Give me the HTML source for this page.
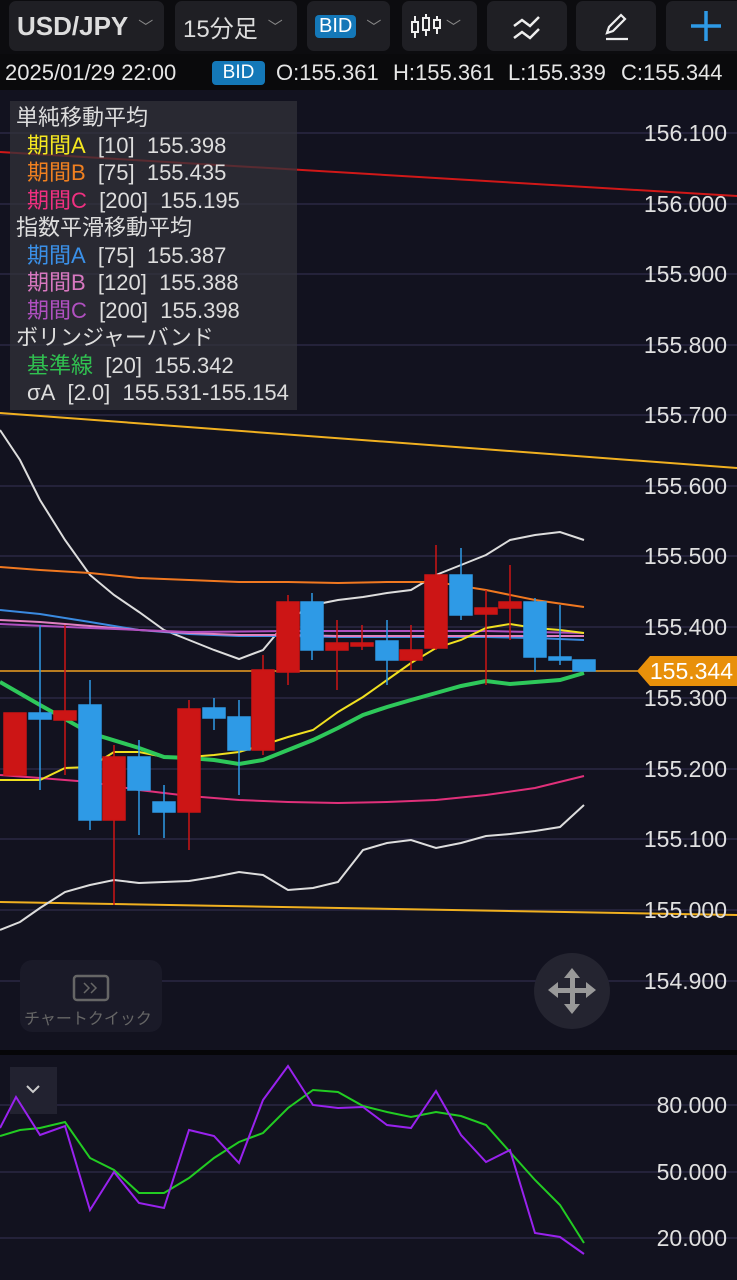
<!DOCTYPE html><html><head><meta charset="utf-8"><style>
body{margin:0;width:737px;height:1280px;background:#12121f;overflow:hidden;font-family:"Liberation Sans","Noto Sans CJK JP",sans-serif;color:#ddd;position:relative}
.top{position:absolute;left:0;top:0;width:737px;height:54px;background:#0c0c0f}
.btn{position:absolute;top:1px;height:50px;background:#1f1f24;border-radius:7px;display:flex;align-items:center;font-size:24px;font-weight:bold;color:#ddd}
.chev{color:#888;font-size:15px;margin-left:10px;font-weight:normal}
.bid{background:#1478b8;color:#fff;border-radius:4px;padding:0 4px;font-weight:normal}
.info{position:absolute;left:0;top:54px;width:737px;height:36px;background:#0a0a0c;font-size:22px;color:#e6e6e6;line-height:38px}
.info span{position:absolute;top:0}
.leg{position:absolute;left:10px;top:101px;width:287px;height:309px;background:rgba(50,50,58,.75);font-size:22px;line-height:27.5px;padding:3px 0 0 6px;box-sizing:border-box}
.leg div{white-space:nowrap}
.i{padding-left:11px}
.pl{position:absolute;right:10px;font-size:23px;color:#e0e0e0}
</style></head><body>
<svg style="position:absolute;left:0;top:0" width="737" height="1280">
<g stroke="#2a2844" stroke-width="1.5">
<line x1="0" y1="133" x2="737" y2="133"/><line x1="0" y1="204" x2="737" y2="204"/><line x1="0" y1="274" x2="737" y2="274"/><line x1="0" y1="345" x2="737" y2="345"/><line x1="0" y1="415" x2="737" y2="415"/><line x1="0" y1="486" x2="737" y2="486"/><line x1="0" y1="556" x2="737" y2="556"/><line x1="0" y1="627" x2="737" y2="627"/><line x1="0" y1="698" x2="737" y2="698"/><line x1="0" y1="769" x2="737" y2="769"/><line x1="0" y1="839" x2="737" y2="839"/><line x1="0" y1="910" x2="737" y2="910"/><line x1="0" y1="981" x2="737" y2="981"/>
<line x1="0" y1="1105" x2="737" y2="1105"/><line x1="0" y1="1172" x2="737" y2="1172"/><line x1="0" y1="1238" x2="737" y2="1238"/>
</g>
<rect x="0" y="1050" width="737" height="5" fill="#060608"/>
<line x1="0" y1="152" x2="737" y2="196" stroke="#d01818" stroke-width="2"/>
<line x1="0" y1="413" x2="737" y2="468" stroke="#f0b020" stroke-width="2"/>
<line x1="0" y1="902" x2="737" y2="915" stroke="#f0b020" stroke-width="2"/>
<line x1="0" y1="671" x2="737" y2="671" stroke="#f0a020" stroke-width="1.5"/>
<g fill="none" stroke-width="2">
<polyline stroke="#ddd" points="0,430 20,460 40,500 65,540 90,575 114,595 139,612 164,630 189,640 214,650 239,659 263,650 288,620 313,605 338,600 363,597 387,593 411,590 436,575 461,565 486,555 510,540 535,535 560,532 584,540"/>
<polyline stroke="#ddd" points="0,930 20,922 40,908 65,892 90,885 114,880 139,883 164,882 189,881 214,877 239,872 263,875 288,890 313,888 338,882 363,850 387,843 411,840 436,848 461,843 486,836 510,834 535,831 560,827 584,805"/>
<polyline stroke="#f07820" points="0,567 40,570 90,573 139,578 189,580 239,582 288,582 338,583 387,582 436,582 486,590 535,600 584,607"/>
<polyline stroke="#3a8ae0" points="0,610 40,614 90,622 139,630 189,634 239,636 288,636 338,637 387,637 436,637 486,637 535,638 584,640"/>
<polyline stroke="#e080c0" points="0,620 40,622 90,626 139,630 189,633 239,635 288,635 338,636 387,636 436,636 486,636 535,636 584,636"/>
<polyline stroke="#b050c0" points="0,624 90,628 189,632 288,631 387,631 486,631 584,633"/>
<polyline stroke="#e0307a" points="0,775 40,778 90,782 139,790 189,796 239,800 288,802 338,803 387,802 436,800 486,795 535,788 584,776"/>
<polyline stroke="#f0e020" points="0,780 40,780 65,768 90,767 114,752 139,752 164,757 189,757 214,755 239,752 263,745 288,737 313,730 338,712 363,697 387,680 411,663 436,648 461,640 486,628 510,624 535,628 560,630 584,633"/>
<polyline stroke="#2ec85a" stroke-width="4" points="0,682 40,705 90,733 139,748 164,757 189,758 214,760 239,764 263,760 288,750 313,740 338,728 363,715 387,707 411,700 436,693 461,686 486,681 510,684 535,682 560,680 584,673"/>
</g>
<g stroke-width="1.5">
<g stroke="#cc1515" fill="#cc1515">
<rect x="4" y="713" width="22" height="62"/><line x1="65" y1="625" x2="65" y2="775"/><rect x="54" y="711" width="22" height="9"/>
<line x1="114" y1="745" x2="114" y2="905"/><rect x="103" y="757" width="22" height="63"/>
<line x1="189" y1="700" x2="189" y2="850"/><rect x="178" y="709" width="22" height="103"/>
<line x1="263" y1="655" x2="263" y2="755"/><rect x="252" y="670" width="22" height="80"/>
<line x1="288" y1="595" x2="288" y2="685"/><rect x="277" y="602" width="22" height="70"/>
<line x1="337" y1="620" x2="337" y2="690"/><rect x="326" y="643" width="22" height="7"/>
<line x1="362" y1="625" x2="362" y2="650"/><rect x="351" y="643" width="22" height="3"/>
<line x1="411" y1="625" x2="411" y2="670"/><rect x="400" y="650" width="22" height="10"/>
<line x1="436" y1="545" x2="436" y2="650"/><rect x="425" y="575" width="22" height="73"/>
<line x1="486" y1="590" x2="486" y2="685"/><rect x="475" y="608" width="22" height="6"/>
<line x1="510" y1="565" x2="510" y2="640"/><rect x="499" y="602" width="22" height="6"/>
</g>
<g stroke="#2e9ae6" fill="#2e9ae6">
<line x1="40" y1="625" x2="40" y2="790"/><rect x="29" y="713" width="22" height="6"/>
<line x1="90" y1="680" x2="90" y2="830"/><rect x="79" y="705" width="22" height="115"/>
<line x1="139" y1="740" x2="139" y2="835"/><rect x="128" y="757" width="22" height="33"/>
<line x1="164" y1="785" x2="164" y2="838"/><rect x="153" y="802" width="22" height="10"/>
<line x1="214" y1="698" x2="214" y2="730"/><rect x="203" y="708" width="22" height="10"/>
<line x1="239" y1="700" x2="239" y2="795"/><rect x="228" y="717" width="22" height="33"/>
<line x1="312" y1="593" x2="312" y2="660"/><rect x="301" y="602" width="22" height="48"/>
<line x1="387" y1="620" x2="387" y2="685"/><rect x="376" y="641" width="22" height="19"/>
<line x1="461" y1="548" x2="461" y2="620"/><rect x="450" y="575" width="22" height="40"/>
<line x1="535" y1="598" x2="535" y2="672"/><rect x="524" y="602" width="22" height="55"/>
<line x1="560" y1="605" x2="560" y2="665"/><rect x="549" y="657" width="22" height="3"/>
<rect x="573" y="660" width="22" height="11"/>
</g></g>
<path d="M637,671 L650,656 H737 V686 H650 Z" fill="#e8900a"/>
<rect x="20" y="960" width="142" height="72" rx="12" fill="#1a1a28"/>
<rect x="74" y="976" width="34" height="24" rx="3" fill="none" stroke="#666" stroke-width="2.5"/>
<path d="M84,983 l5,5 -5,5 M91,983 l5,5 -5,5" fill="none" stroke="#666" stroke-width="1.5"/>
<ellipse cx="572" cy="991" rx="38" ry="38" fill="#242430"/>
<g fill="#999"><rect x="570" y="975" width="5" height="32"/><rect x="556" y="988" width="32" height="5"/>
<path d="M572,968 l-8,10 h16z M572,1014 l-8,-10 h16z M548,990 l10,-8 v16z M596,990 l-10,-8 v16z"/></g>
<rect x="10" y="1067" width="47" height="47" fill="#222230"/>
<path d="M27,1086 l6,6 6,-6" fill="none" stroke="#ccc" stroke-width="2"/>
<g fill="none" stroke-width="2">
<polyline stroke="#22cc22" points="0,1136 20,1130 40,1128 65,1122 90,1158 114,1170 139,1193 164,1193 189,1178 214,1158 239,1142 263,1133 288,1108 313,1090 338,1092 363,1106 387,1112 411,1117 436,1112 461,1116 486,1125 510,1152 535,1180 560,1205 584,1243"/>
<polyline stroke="#9922ee" points="0,1128 16,1097 40,1135 65,1126 90,1210 114,1172 139,1203 164,1208 189,1130 214,1136 239,1163 263,1100 288,1066 313,1105 338,1108 363,1107 387,1125 411,1128 436,1091 461,1135 486,1162 510,1150 535,1233 560,1237 584,1254"/>
</g>
</svg>
<div class="top">
<div class="btn" style="left:9px;width:155px;padding-left:8px;box-sizing:border-box;font-size:26px">USD/JPY<span class="chev">﹀</span></div>
<div class="btn" style="left:175px;width:122px;padding-left:8px;box-sizing:border-box;font-weight:normal">15分足<span class="chev">﹀</span></div>
<div class="btn" style="left:307px;width:83px;padding-left:8px;box-sizing:border-box;font-size:20px"><span class="bid">BID</span><span class="chev">﹀</span></div>
<div class="btn" style="left:402px;width:75px;padding-left:8px;box-sizing:border-box"><svg width="32" height="28"><g stroke="#eee" stroke-width="2" fill="none"><line x1="5" y1="4" x2="5" y2="26"/><rect x="2" y="10" width="6" height="10" fill="#1f1f24"/><line x1="16" y1="2" x2="16" y2="24"/><rect x="13" y="6" width="6" height="12" fill="#1f1f24"/><line x1="27" y1="4" x2="27" y2="22"/><rect x="24" y="8" width="6" height="8" fill="#1f1f24"/></g></svg><span class="chev" style="margin-left:4px">﹀</span></div>
<div class="btn" style="left:487px;width:80px;justify-content:center"><svg width="30" height="28"><path d="M2,14 l8,-6 8,6 9,-9 M2,26 l8,-6 8,6 9,-9" fill="none" stroke="#eee" stroke-width="2.5"/></svg></div>
<div class="btn" style="left:576px;width:80px;justify-content:center"><svg width="30" height="30"><path d="M6,22 l2,-6 12,-12 4,4 -12,12z M5,28 h22" fill="none" stroke="#eee" stroke-width="2.2"/></svg></div>
<div class="btn" style="left:666px;width:80px;justify-content:flex-start;padding-left:23px;box-sizing:border-box"><svg width="34" height="34"><path d="M17,2 v30 M2,17 h30" stroke="#2e9ae6" stroke-width="3.5"/></svg></div>
</div>
<div class="info"><span style="left:5px">2025/01/29 22:00</span><span class="bid" style="left:212px;top:7px;height:24px;width:53px;line-height:24px;text-align:center;font-size:19px;padding:0">BID</span><span style="left:276px">O:155.361</span><span style="left:393px">H:155.361</span><span style="left:508px">L:155.339</span><span style="left:621px">C:155.344</span></div>
<div class="leg">
<div>単純移動平均</div>
<div class="i"><span style="color:#f5e820">期間A</span>&nbsp; [10]&nbsp; 155.398</div>
<div class="i"><span style="color:#f08020">期間B</span>&nbsp; [75]&nbsp; 155.435</div>
<div class="i"><span style="color:#f03080">期間C</span>&nbsp; [200]&nbsp; 155.195</div>
<div>指数平滑移動平均</div>
<div class="i"><span style="color:#3a90e8">期間A</span>&nbsp; [75]&nbsp; 155.387</div>
<div class="i"><span style="color:#d878c0">期間B</span>&nbsp; [120]&nbsp; 155.388</div>
<div class="i"><span style="color:#b050c0">期間C</span>&nbsp; [200]&nbsp; 155.398</div>
<div>ボリンジャーバンド</div>
<div class="i"><span style="color:#30c050">基準線</span>&nbsp; [20]&nbsp; 155.342</div>
<div class="i">σA&nbsp; [2.0]&nbsp; 155.531-155.154</div>
</div>
<div class="pl" style="top:120px">156.100</div>
<div class="pl" style="top:191px">156.000</div>
<div class="pl" style="top:261px">155.900</div>
<div class="pl" style="top:332px">155.800</div>
<div class="pl" style="top:402px">155.700</div>
<div class="pl" style="top:473px">155.600</div>
<div class="pl" style="top:543px">155.500</div>
<div class="pl" style="top:614px">155.400</div>
<div class="pl" style="top:685px">155.300</div>
<div class="pl" style="top:756px">155.200</div>
<div class="pl" style="top:826px">155.100</div>
<div class="pl" style="top:897px">155.000</div>
<div class="pl" style="top:968px">154.900</div>
<div class="pl" style="top:658px;color:#fff;right:4px">155.344</div>
<div style="position:absolute;left:24px;top:1005px;font-size:16px;color:#666">チャートクイック</div>
<div class="pl" style="top:1092px">80.000</div>
<div class="pl" style="top:1159px">50.000</div>
<div class="pl" style="top:1225px">20.000</div>
</body></html>
